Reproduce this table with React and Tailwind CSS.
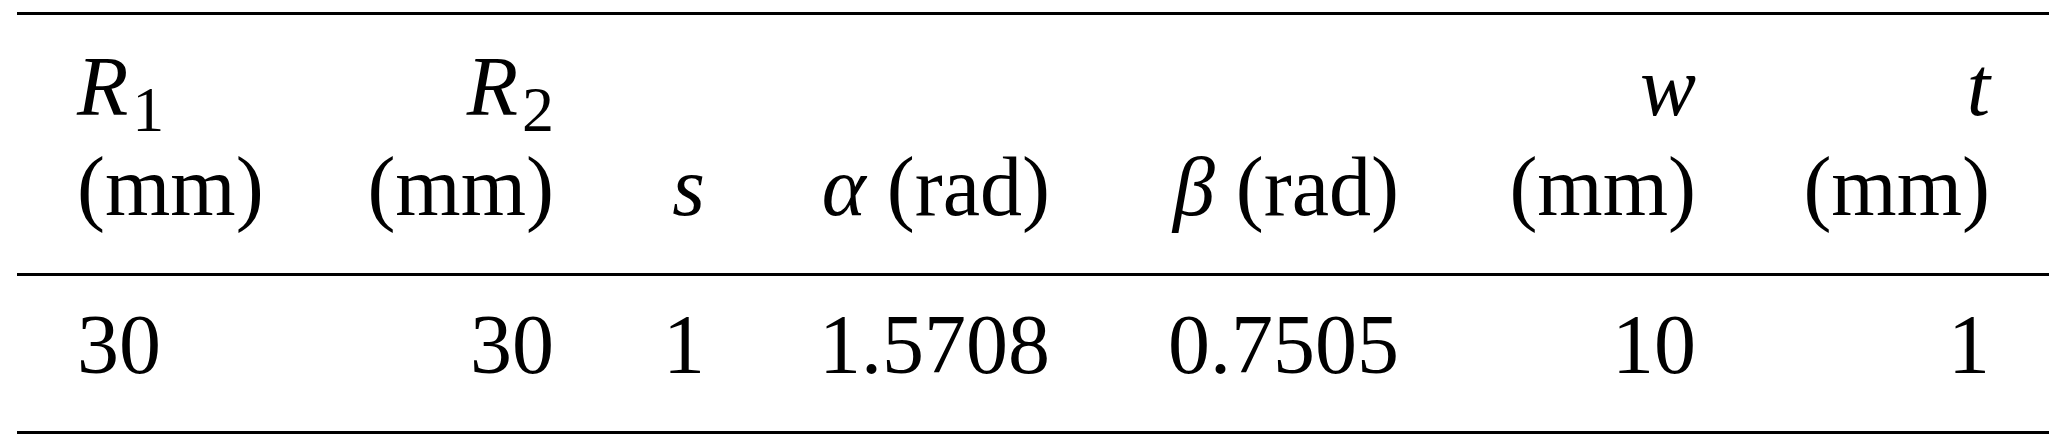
const cols = "grid grid-cols-[298px_297px_148px_347px_349px_297px_296px]";

const headers = [
  {
    top: (
      <>
        <i>R</i>
        <sub className="text-[64px] ml-[4px]">1</sub>
      </>
    ),
    bottom: "(mm)",
    pad: "pl-[60px] text-left",
  },
  {
    top: (
      <>
        <i>R</i>
        <sub className="text-[64px] ml-[4px]">2</sub>
      </>
    ),
    bottom: "(mm)",
    pad: "pr-[58px] text-right",
  },
  { top: null, bottom: <i>s</i>, pad: "pr-[55px] text-right" },
  {
    top: null,
    bottom: (
      <>
        <i>α</i> (rad)
      </>
    ),
    pad: "pr-[57px] text-right",
  },
  {
    top: null,
    bottom: (
      <>
        <i>β</i> (rad)
      </>
    ),
    pad: "pr-[57px] text-right",
  },
  { top: <i>w</i>, bottom: "(mm)", pad: "pr-[57px] text-right" },
  { top: <i>t</i>, bottom: "(mm)", pad: "pr-[59px] text-right" },
];

const values = ["30", "30", "1", "1.5708", "0.7505", "10", "1"];

export default function App() {
  return (
    <div className="bg-white w-[2067px] h-[447px] pt-[12px] pl-[17px] text-black text-[84px] leading-[100px] font-['Liberation_Serif']">
      <div className="w-[2032px] border-y-[3px] border-black">
        {/* Header */}
        <div className={`${cols} pt-[22px] pb-[36px] border-b-[3px] border-black`}>
          {headers.map((h, i) => (
            <div key={i} className={h.pad}>
              <div className="h-[100px] whitespace-nowrap">{h.top}</div>
              <div className="h-[100px] whitespace-nowrap">{h.bottom}</div>
            </div>
          ))}
        </div>

        {/* Data row */}
        <div className={`${cols} pt-[19px] pb-[36px]`}>
          {values.map((v, i) => (
            <div key={i} className={`${headers[i].pad} h-[100px] whitespace-nowrap`}>
              {v}
            </div>
          ))}
        </div>
      </div>
    </div>
  );
}
